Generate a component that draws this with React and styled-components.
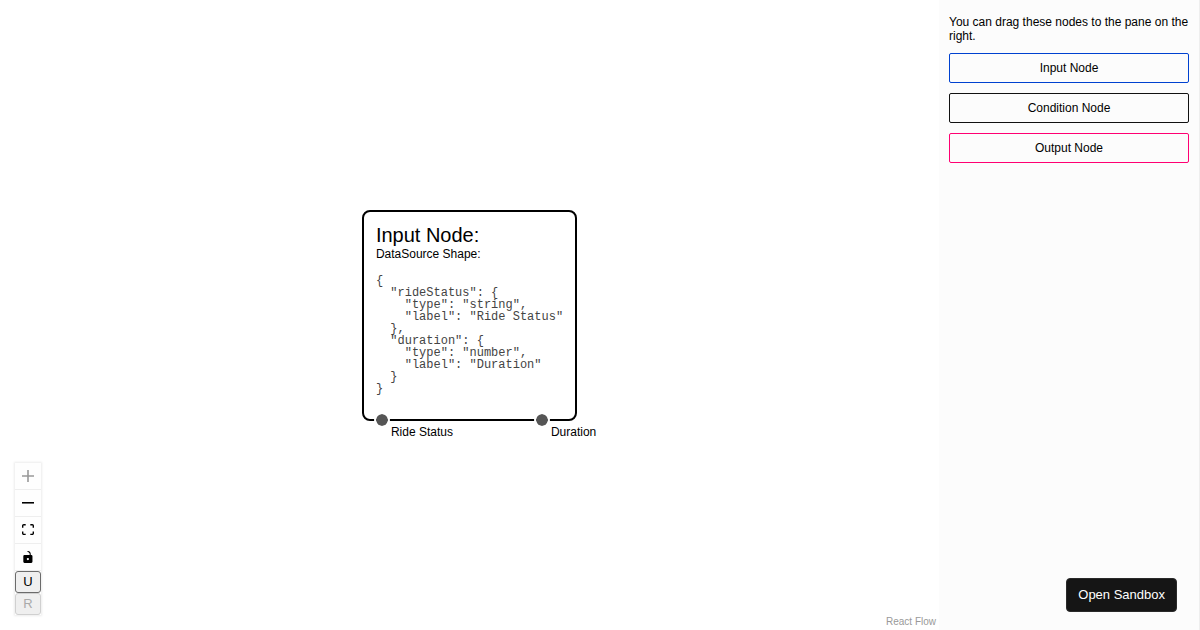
import React, { useState } from 'react';
import styled, { createGlobalStyle } from 'styled-components';

const dataSource = {
  rideStatus: {
    type: 'string',
    label: 'Ride Status',
  },
  duration: {
    type: 'number',
    label: 'Duration',
  },
};

const paletteNodes = [
  { type: 'input', label: 'Input Node', color: '#0041d0' },
  { type: 'condition', label: 'Condition Node', color: '#111' },
  { type: 'output', label: 'Output Node', color: '#ff0072' },
];

const handles = [
  { id: 'rideStatus', x: 18 },
  { id: 'duration', x: 178 },
];

const PlusIcon = () => (
  <svg viewBox="0 0 32 32">
    <path d="M32 18.133H18.133V32h-4.266V18.133H0v-4.266h13.867V0h4.266v13.867H32z" />
  </svg>
);

const MinusIcon = () => (
  <svg viewBox="0 0 32 5">
    <path d="M0 0h32v4.2H0z" />
  </svg>
);

const FitViewIcon = () => (
  <svg viewBox="0 0 32 30">
    <path d="M3.692 4.63c0-.53.4-.938.939-.938h5.215V0H4.708C2.13 0 0 2.054 0 4.63v5.216h3.692V4.631zM27.354 0h-5.2v3.692h5.17c.53 0 .984.4.984.939v5.215H32V4.631A4.624 4.624 0 0027.354 0zm.954 24.83c0 .532-.4.94-.939.94h-5.215v3.768h5.215c2.577 0 4.631-2.13 4.631-4.707v-5.139h-3.692v5.139zm-23.677.94c-.531 0-.939-.4-.939-.94v-5.138H0v5.139c0 2.577 2.13 4.707 4.708 4.707h5.138V25.77H4.631z" />
  </svg>
);

const UnlockIcon = () => (
  <svg viewBox="0 0 25 32">
    <path d="M21.333 10.667H19.81V7.619C19.81 3.429 16.38 0 12.19 0c-4.114 1.828-1.37 2.133.305 2.438 1.676.305 4.42 2.59 4.42 5.181v3.048H3.047A3.056 3.056 0 000 13.714v15.238A3.056 3.056 0 003.048 32h18.285a3.056 3.056 0 003.048-3.048V13.714a3.056 3.056 0 00-3.048-3.047zM12.19 24.533a3.056 3.056 0 01-3.047-3.047 3.056 3.056 0 013.047-3.048 3.056 3.056 0 013.048 3.048 3.056 3.056 0 01-3.048 3.047z" />
  </svg>
);

const App = () => {
  const [locked, setLocked] = useState(false);

  const handleDragStart = (e, type) => {
    e.dataTransfer.setData('application/reactflow', type);
    e.dataTransfer.effectAllowed = 'move';
  };

  return (
    <Page>
      <GlobalStyle />

      <Canvas>
        <Node>
          <NodeTitle>Input Node:</NodeTitle>
          <NodeSubtitle>DataSource Shape:</NodeSubtitle>
          <Shape>{JSON.stringify(dataSource, null, 2)}</Shape>
          {handles.map((handle) => (
            <Handle key={handle.id} $x={handle.x}>
              <HandleLabel>{dataSource[handle.id].label}</HandleLabel>
            </Handle>
          ))}
        </Node>

        <Controls>
          <ControlButton type="button" aria-label="zoom in" disabled>
            <PlusIcon />
          </ControlButton>
          <ControlButton type="button" aria-label="zoom out">
            <MinusIcon />
          </ControlButton>
          <ControlButton type="button" aria-label="fit view">
            <FitViewIcon />
          </ControlButton>
          <ControlButton
            type="button"
            aria-label="toggle interactivity"
            aria-pressed={locked}
            onClick={() => setLocked(!locked)}
          >
            <UnlockIcon />
          </ControlButton>
          <HistoryButton type="button">U</HistoryButton>
          <HistoryButton type="button" disabled>R</HistoryButton>
        </Controls>

        <Attribution href="https://reactflow.dev">React Flow</Attribution>
      </Canvas>

      <Sidebar>
        <Description>You can drag these nodes to the pane on the right.</Description>
        {paletteNodes.map((node) => (
          <PaletteNode
            key={node.type}
            $color={node.color}
            draggable
            onDragStart={(e) => handleDragStart(e, node.type)}
          >
            {node.label}
          </PaletteNode>
        ))}
      </Sidebar>

      <SandboxButton type="button">Open Sandbox</SandboxButton>
    </Page>
  );
};

const GlobalStyle = createGlobalStyle`
  body {
    margin: 0;
    font-family: Helvetica, 'Liberation Sans', Arial, sans-serif;
    font-size: 12px;
    line-height: 14px;
    color: #000;
  }
`;

const Page = styled.div`
  display: flex;
  height: 100vh;
`;

const Canvas = styled.main`
  position: relative;
  flex: 1;
  display: flex;
  align-items: center;
  justify-content: center;
  background: #fff;
`;

const Node = styled.div`
  position: relative;
  padding: 12px;
  border: 2px solid #000;
  border-radius: 8px;
  background: #fff;
`;

const NodeTitle = styled.div`
  font-size: 20px;
  line-height: 23px;
`;

const NodeSubtitle = styled.div`
  font-size: 12px;
`;

const Shape = styled.pre`
  margin: 14px 0 12px;
  font-family: 'Liberation Mono', 'Courier New', monospace;
  font-size: 12px;
  line-height: 12px;
  color: #444;
`;

const Handle = styled.div`
  position: absolute;
  left: ${({ $x }) => $x}px;
  bottom: -1px;
  width: 12px;
  height: 12px;
  border: 2px solid #fff;
  border-radius: 50%;
  background: #555;
  background-clip: padding-box;
  transform: translate(-50%, 50%);
`;

const HandleLabel = styled.span`
  position: absolute;
  top: 11px;
  left: 15px;
  white-space: nowrap;
`;

const Controls = styled.div`
  position: absolute;
  left: 15px;
  bottom: 15px;
  display: flex;
  flex-direction: column;
  width: 26px;
  box-shadow: 0 0 2px 1px rgba(0, 0, 0, 0.08);
`;

const ControlButton = styled.button`
  display: flex;
  align-items: center;
  justify-content: center;
  height: 27px;
  padding: 0;
  border: none;
  border-bottom: 1px solid #eee;
  background: #fefefe;
  cursor: pointer;

  svg {
    width: 12px;
    max-height: 12px;
    fill: #000;
  }

  &:disabled svg {
    fill-opacity: 0.4;
  }
`;

const HistoryButton = styled.button`
  height: 22px;
  padding: 0 0 2px;
  border: 1px solid #6b6b6b;
  border-radius: 3px;
  background: #efefef;
  font-family: inherit;
  font-size: 13px;
  color: #000;

  &:disabled {
    border-color: #d0d0d0;
    color: #aaa;
  }
`;

const Attribution = styled.a`
  position: absolute;
  right: 0;
  bottom: 0;
  padding: 2px 3px;
  font-size: 10px;
  line-height: 12px;
  color: #999;
  text-decoration: none;
`;

const Sidebar = styled.aside`
  width: 20%;
  padding: 15px 10px;
  border-right: 1px solid #eee;
  background: #fcfcfc;
`;

const Description = styled.div`
  margin-bottom: 10px;
`;

const PaletteNode = styled.div`
  display: flex;
  align-items: center;
  justify-content: center;
  height: 28px;
  margin-bottom: 10px;
  border: 1px solid ${({ $color }) => $color};
  border-radius: 2px;
  cursor: grab;
`;

const SandboxButton = styled.button`
  position: fixed;
  right: 23px;
  bottom: 18px;
  height: 34px;
  padding: 0 11px 2px;
  border: 1px solid #2a2a2a;
  border-radius: 4px;
  background: #151515;
  font-family: 'Liberation Sans', Arial, sans-serif;
  font-size: 13px;
  color: #fff;
  cursor: pointer;
`;

export default App;
